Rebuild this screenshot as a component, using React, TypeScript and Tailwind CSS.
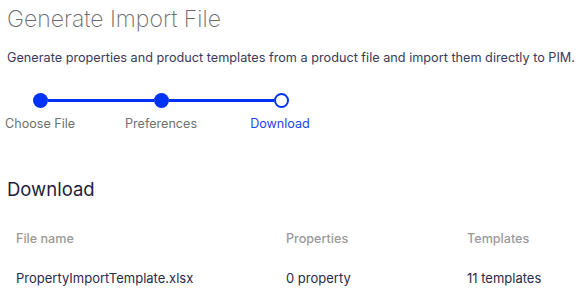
const steps = [
  { label: "Choose File", done: true },
  { label: "Preferences", done: true },
  { label: "Download", done: false },
];

const rows = [
  { file: "PropertyImportTemplate.xlsx", properties: "0 property", templates: "11 templates" },
];

const App = () => {
  return (
    <div className="bg-white w-[581px] h-[307px] overflow-hidden font-['Inter',sans-serif]">
      <div className="pl-[7px] pt-[5px]">
        <h1 className="text-[23px] leading-[28px] font-extralight text-[#6b6b6b]">Generate Import File</h1>
        <p className="mt-[16px] text-[12.7px] leading-[18px] whitespace-nowrap text-[#3a3a5a]">
          Generate properties and product templates from a product file and import them directly to PIM.
        </p>
      </div>

      <div className="mt-[26px]">
        <div className="ml-[33px] w-[256px] flex items-center">
          <span className="w-[15px] h-[15px] rounded-full bg-[#0033f5]" />
          <span className="flex-1 h-[3px] bg-[#0033f5]" />
          <span className="w-[15px] h-[15px] rounded-full bg-[#0033f5]" />
          <span className="flex-1 h-[3px] bg-[#0033f5]" />
          <span className="w-[15px] h-[15px] rounded-full border-2 border-[#0033f5] bg-white" />
        </div>
        <div className="ml-[5px] mt-[7px] flex gap-[50px]">
          {steps.map((s) => (
            <span
              key={s.label}
              className={`w-[70px] text-center whitespace-nowrap text-[12.6px] leading-[18px] ${
                s.done ? "text-[#707070]" : "text-[#2146f0]"
              }`}
            >
              {s.label}
            </span>
          ))}
        </div>
      </div>

      <h2 className="pl-[7px] mt-[44px] text-[18.5px] leading-[24px] text-[#1e1e3c]">Download</h2>

      <div className="mt-[24px] pl-[16px]">
        <div className="grid grid-cols-[270px_181px_1fr] h-[28px] items-center text-[12.6px] font-medium text-[#9a9a9a]">
          <span>File name</span>
          <span>Properties</span>
          <span>Templates</span>
        </div>
        {rows.map((r) => (
          <div
            key={r.file}
            className="grid grid-cols-[270px_181px_1fr] mt-[12px] h-[28px] items-center text-[13px] text-[#2a2a48]"
          >
            <span>{r.file}</span>
            <span>{r.properties}</span>
            <span>{r.templates}</span>
          </div>
        ))}
      </div>
    </div>
  );
};

export default App;
